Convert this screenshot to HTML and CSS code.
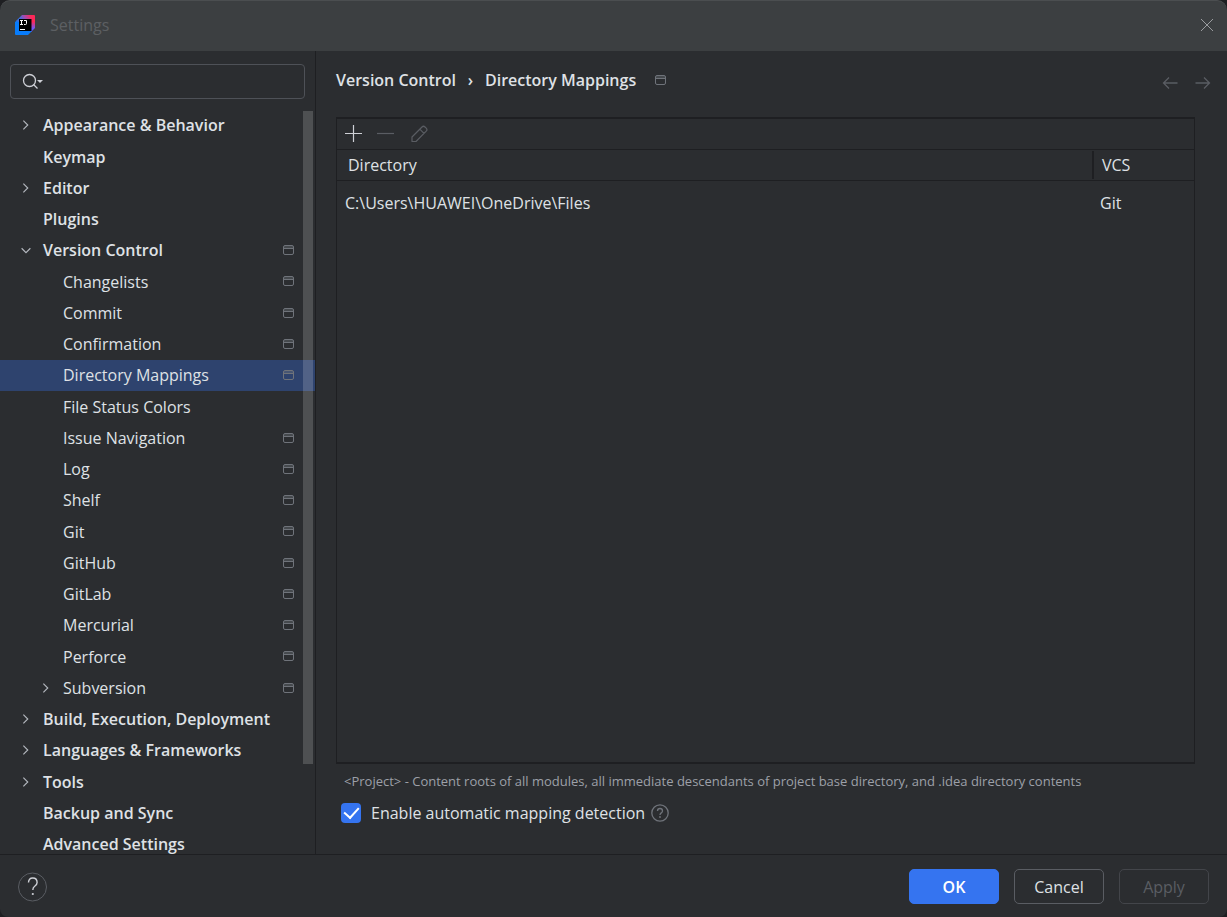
FILE: index.html
```html
<!DOCTYPE html>
<html lang="en">
<head>
  <meta charset="UTF-8">
  <title>Settings</title>
  <meta name="viewport" content="width=device-width, initial-scale=1">
  <link rel="stylesheet" href="styles.css">
</head>
<body>
  <svg class="defs" aria-hidden="true">
    <symbol id="chevron-right" viewBox="0 0 16 16"><path d="M5 3l5 5-5 5" fill="none" stroke="currentColor" stroke-width="1.3"/></symbol>
    <symbol id="chevron-down" viewBox="0 0 16 16"><path d="M3 6l5 5 5-5" fill="none" stroke="currentColor" stroke-width="1.3"/></symbol>
    <symbol id="project" viewBox="0 0 13 13"><rect x="1.5" y="1.5" width="10" height="9" rx="1.5" fill="none" stroke="currentColor"/><path d="M2 2h9v2H2z" fill="currentColor" opacity=".4"/><path d="M2 4.5h9" stroke="currentColor"/></symbol>
  </svg>

  <header class="titlebar">
    <svg class="logo" viewBox="0 0 20 20" aria-hidden="true">
      <defs>
        <linearGradient id="pink" x1="0" y1="0.4" x2="0.9" y2="0.2">
          <stop offset="0.2" stop-color="#3b6fe0"/>
          <stop offset="0.5" stop-color="#a34bb0"/>
          <stop offset="0.9" stop-color="#fe2857"/>
        </linearGradient>
        <linearGradient id="side" x1="0" y1="0" x2="0" y2="1">
          <stop offset="0.35" stop-color="#fe2857"/>
          <stop offset="0.8" stop-color="#6b57ff"/>
        </linearGradient>
      </defs>
      <path d="M0 7l4-3h13v12l-4 4H1a1 1 0 0 1-1-1z" fill="#087cfa"/>
      <path d="M1 6l6-6h12a1 1 0 0 1 1 1v6H3z" fill="url(#pink)"/>
      <path d="M16 4l4-3v12l-4 4z" fill="url(#side)"/>
      <path d="M4 4h12.5v12H4z" fill="#000"/>
      <path d="M5 5.5h3M6.5 5.5v4M5 9.5h3M9 5.5h2.5v3q0 1-1 1H9M5 14.5h5" fill="none" stroke="#fff"/>
    </svg>
    <h1>Settings</h1>
    <button class="icon-button close" aria-label="Close">
      <svg width="14" height="14" viewBox="0 0 14 14"><path d="M1 1l12 12M13 1L1 13" stroke="currentColor" fill="none"/></svg>
    </button>
  </header>

  <div class="content">
    <aside class="sidebar">
      <label class="search">
        <svg width="22" height="18" viewBox="0 0 22 18" aria-hidden="true"><circle cx="7.5" cy="7.5" r="6" fill="none" stroke="currentColor" stroke-width="1.3"/><path d="M11.5 11.5l4 4" stroke="currentColor" stroke-width="1.3"/><path d="M15 7h6l-3 3z" fill="currentColor"/></svg>
        <input type="text" aria-label="Search settings">
      </label>
      <nav class="tree-wrap">
        <ul class="tree">
          <li class="group"><svg class="arrow"><use href="#chevron-right"/></svg><a href="#">Appearance &amp; Behavior</a></li>
          <li class="group"><a href="#">Keymap</a></li>
          <li class="group"><svg class="arrow"><use href="#chevron-right"/></svg><a href="#">Editor</a></li>
          <li class="group"><a href="#">Plugins</a></li>
          <li class="group"><svg class="arrow"><use href="#chevron-down"/></svg><a href="#">Version Control</a><svg class="project"><use href="#project"/></svg></li>
          <li><a href="#">Changelists</a><svg class="project"><use href="#project"/></svg></li>
          <li><a href="#">Commit</a><svg class="project"><use href="#project"/></svg></li>
          <li><a href="#">Confirmation</a><svg class="project"><use href="#project"/></svg></li>
          <li class="selected"><a href="#" aria-current="page">Directory Mappings</a><svg class="project"><use href="#project"/></svg></li>
          <li><a href="#">File Status Colors</a></li>
          <li><a href="#">Issue Navigation</a><svg class="project"><use href="#project"/></svg></li>
          <li><a href="#">Log</a><svg class="project"><use href="#project"/></svg></li>
          <li><a href="#">Shelf</a><svg class="project"><use href="#project"/></svg></li>
          <li><a href="#">Git</a><svg class="project"><use href="#project"/></svg></li>
          <li><a href="#">GitHub</a><svg class="project"><use href="#project"/></svg></li>
          <li><a href="#">GitLab</a><svg class="project"><use href="#project"/></svg></li>
          <li><a href="#">Mercurial</a><svg class="project"><use href="#project"/></svg></li>
          <li><a href="#">Perforce</a><svg class="project"><use href="#project"/></svg></li>
          <li><svg class="arrow"><use href="#chevron-right"/></svg><a href="#">Subversion</a><svg class="project"><use href="#project"/></svg></li>
          <li class="group"><svg class="arrow"><use href="#chevron-right"/></svg><a href="#">Build, Execution, Deployment</a></li>
          <li class="group"><svg class="arrow"><use href="#chevron-right"/></svg><a href="#">Languages &amp; Frameworks</a></li>
          <li class="group"><svg class="arrow"><use href="#chevron-right"/></svg><a href="#">Tools</a></li>
          <li class="group"><a href="#">Backup and Sync</a></li>
          <li class="group"><a href="#">Advanced Settings</a></li>
        </ul>
        <div class="scrollbar"></div>
      </nav>
    </aside>

    <main class="page">
      <div class="page-header">
        <h2 class="breadcrumb"><a href="#">Version Control</a><span class="sep">›</span><span>Directory Mappings</span></h2>
        <svg class="project"><use href="#project"/></svg>
        <div class="history">
          <button class="icon-button" aria-label="Back" disabled><svg width="16" height="14" viewBox="0 0 16 14"><path d="M15.5 7H1.5M7 1.5L1.5 7 7 12.5" fill="none" stroke="currentColor" stroke-width="1.3"/></svg></button>
          <button class="icon-button" aria-label="Forward" disabled><svg width="16" height="14" viewBox="0 0 16 14"><path d="M.5 7h14M9 1.5L14.5 7 9 12.5" fill="none" stroke="currentColor" stroke-width="1.3"/></svg></button>
        </div>
      </div>

      <section class="mappings">
        <div class="toolbar">
          <button class="icon-button" aria-label="Add"><svg width="18" height="18" viewBox="0 0 18 18"><path d="M1 9.5h17M9.5 1v17" stroke="currentColor" stroke-width="1.2"/></svg></button>
          <button class="icon-button" aria-label="Remove" disabled><svg width="18" height="18" viewBox="0 0 18 18"><path d="M0 9.5h17" stroke="currentColor" stroke-width="1.2"/></svg></button>
          <button class="icon-button" aria-label="Edit" disabled><svg width="18" height="18" viewBox="0 0 18 18"><path d="M2 17.5V13L12 3q1.500-1.500 3 0l1.200 1.200q1.500 1.500 0 3L6 17.500zM9.800 5.200l4.200 4.200" fill="none" stroke="currentColor" stroke-width="1.2" stroke-linejoin="round"/></svg></button>
        </div>
        <table>
          <thead>
            <tr><th>Directory</th><th class="vcs"><span>VCS</span></th></tr>
          </thead>
          <tbody>
            <tr><td>C:\Users\HUAWEI\OneDrive\Files</td><td>Git</td></tr>
          </tbody>
        </table>
      </section>

      <p class="hint">&lt;Project&gt; - Content roots of all modules, all immediate descendants of project base directory, and .idea directory contents</p>
      <div class="option">
        <input type="checkbox" id="detect" checked>
        <label for="detect">Enable automatic mapping detection</label>
        <button class="icon-button help-small" aria-label="Help on mapping detection"><svg width="18" height="18" viewBox="0 0 18 18"><circle cx="9" cy="9" r="8.2" fill="none" stroke="currentColor" stroke-width="1.3"/><path d="M6.5 7q0-2.500 2.500-2.500T11.500 7q0 1-1.250 1.900T9 11" fill="none" stroke="currentColor" stroke-width="1.3"/><circle cx="9" cy="13" r=".9" fill="currentColor"/></svg></button>
      </div>
    </main>
  </div>

  <footer class="footer">
    <button class="icon-button help" aria-label="Help"><svg width="30" height="30" viewBox="0 0 30 30"><circle cx="14.5" cy="15" r="14" fill="none" stroke="#5a5d63"/><path d="M10.500 10.500q0-4.500 4.300-4.500t4.300 4.500q0 2-2.150 3.500T14.800 18" fill="none" stroke="currentColor" stroke-width="1.4"/><circle cx="14.8" cy="22" r="1.1" fill="currentColor"/></svg></button>
    <button class="btn primary">OK</button>
    <button class="btn">Cancel</button>
    <button class="btn" disabled>Apply</button>
  </footer>
</body>
</html>
```
FILE: styles.css
```css
* { box-sizing: border-box; }
html { background: #1e1f22; }
body {
  margin: 0;
  height: 100vh;
  display: flex;
  flex-direction: column;
  overflow: hidden;
  color: #dfe1e5;
  font: 16px/24px "Open Sans", "Noto Sans", sans-serif;
}
h1, h2, p, ul { margin: 0; padding: 0; }
a { color: inherit; text-decoration: none; }
button, input { font: inherit; color: inherit; }
.defs { position: absolute; width: 0; height: 0; }

.icon-button { display: flex; padding: 0; border: 0; background: none; color: #ced0d6; }
.icon-button:disabled { color: #5a5d63; }

.titlebar {
  display: flex;
  align-items: center;
  height: 51px;
  padding: 0 13px 2px 15px;
  border-top: 1px solid #4b4e50;
  border-radius: 10px 10px 0 0;
  background: #3c3f41;
}
.titlebar h1 { flex: 1; margin-left: 15px; font-size: 16px; font-weight: normal; color: #5c5f63; }
.logo { width: 20px; height: 20px; }
.close { color: #9a9c9f; }

.content { flex: 1; display: flex; min-height: 0; background: #2b2d30; }

.sidebar { display: flex; flex-direction: column; width: 316px; border-right: 1px solid #1e1f22; }
.search {
  display: flex;
  align-items: center;
  height: 35px;
  margin: 13px 10px 11px;
  padding: 0 11px;
  border: 1px solid #4e5157;
  border-radius: 4px;
  color: #ced0d6;
}
.search input { flex: 1; min-width: 0; border: 0; outline: 0; background: none; }

.tree-wrap { position: relative; flex: 1; min-height: 0; overflow: hidden; }
.tree { list-style: none; }
.tree li { display: flex; align-items: center; height: 31px; padding: 0 20px 1px 63px; }
.tree li:nth-child(4n+2) { height: 32px; }
.tree .group { padding-left: 43px; font-weight: 600; }
.tree a { flex: 1; white-space: nowrap; }
.tree .selected { background: #2e436e; }
.arrow { width: 14px; height: 14px; margin: 0 10px 0 -24px; color: #b4b8bf; }
.project { flex: none; width: 13px; height: 13px; color: #6f737a; }
.scrollbar { position: absolute; top: 1px; right: 2px; bottom: 90px; width: 10px; background: rgba(255, 255, 255, 0.17); }

.page { flex: 1; display: flex; flex-direction: column; min-width: 0; padding: 0 32px 27px 20px; }
.page-header { display: flex; align-items: center; height: 58px; margin-right: -16px; }
.breadcrumb { display: flex; margin-right: 18px; font-size: 16px; font-weight: 600; }
.sep { width: 29px; text-align: center; }
.history { display: flex; gap: 17px; margin-left: auto; padding-top: 5px; }

.mappings { flex: 1; margin-top: 8px; border: 1px solid #1e1f22; border-width: 2px 1px; }
.toolbar { display: flex; align-items: center; gap: 15px; height: 30px; padding: 0 0 2px 7px; }
table { width: 100%; border-collapse: collapse; table-layout: fixed; }
th { height: 31px; padding: 0 0 0 11px; border: 1px solid #1e1f22; border-width: 1px 0; font-weight: normal; text-align: left; }
.vcs { width: 102px; padding: 1px 0; }
.vcs span { display: block; padding: 2px 0 2px 8px; border-left: 2px solid #1e1f22; }
td { height: 45px; padding: 0 8px; }

.hint { margin: 5px 0 0 8px; font-size: 13px; color: #9da0a8; white-space: nowrap; }
.option { display: flex; align-items: center; height: 28px; margin: 6px 0 0 5px; }
.option input {
  appearance: none;
  display: grid;
  place-items: center;
  width: 20px;
  height: 20px;
  margin: 0 10px 0 0;
  border-radius: 4px;
  background: #3574f0;
}
.option input:checked::before {
  content: "";
  width: 7px;
  height: 12px;
  margin-bottom: 4px;
  border: solid #fff;
  border-width: 0 2px 2px 0;
  transform: rotate(42deg);
}
.help-small { margin-left: 6px; color: #6f737a; }

.footer {
  display: flex;
  align-items: center;
  gap: 15px;
  height: 63px;
  padding: 1px 18px 0;
  border-top: 1px solid #1e1f22;
  border-radius: 0 0 8px 8px;
  background: #2b2d30;
}
.help { margin-right: auto; }
.btn { width: 90px; height: 35px; padding: 0; border: 1px solid #5a5d63; border-radius: 5px; background: none; }
.btn:disabled { border-color: #43454a; color: #5a5d63; }
.primary { border-color: #3574f0; background: #3574f0; color: #fff; font-weight: 600; }
```
